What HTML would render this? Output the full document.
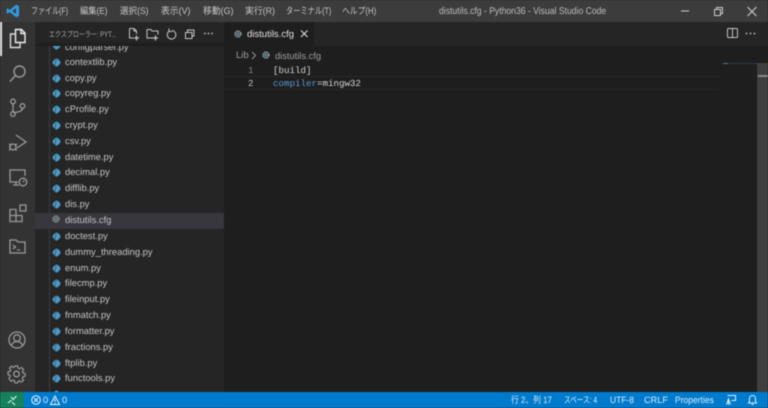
<!DOCTYPE html>
<html lang="ja"><head><meta charset="utf-8"><title>distutils.cfg - Python36 - Visual Studio Code</title>
<style>
*{box-sizing:border-box}
html,body{margin:0;padding:0;width:768px;height:408px;overflow:hidden;background:#1e1e1e}
body{font-family:"Liberation Sans","Noto Sans CJK JP",sans-serif;position:relative;text-rendering:geometricPrecision}
#w{position:absolute;left:0;top:0;width:768px;height:408px;overflow:hidden;filter:blur(.45px)}
.a{position:absolute;white-space:nowrap}
svg{position:absolute;overflow:visible}
.m{position:absolute;top:5px;font-size:9.5px;line-height:13px;color:#c6c6c6;white-space:nowrap;transform-origin:0 50%}
.f{position:absolute;left:65px;margin-top:-.8px;font-size:9.4px;line-height:14px;height:14px;color:#c4c4c4;white-space:nowrap}
.p{position:absolute;left:51px;width:10px;height:10px}
.p i{position:absolute;left:1.5px;top:1.5px;width:7px;height:7px;background:#4a9bc8;transform:rotate(45deg);border-radius:2.2px}
.p b{position:absolute;left:4.4px;top:.8px;width:1.2px;height:8.4px;background:#252526;transform:rotate(12deg);opacity:.45}
.s{position:absolute;top:395px;font-size:9.2px;line-height:11px;color:#d8ecf8;white-space:nowrap;transform-origin:0 50%}
</style></head><body><div id="w">
<div class="a" style="left:0;top:0;width:768px;height:22px;background:#3c3c3c"></div>
<div class="a" style="left:0;top:22px;width:35px;height:370px;background:#333"></div>
<div class="a" style="left:35px;top:22px;width:189px;height:370px;background:#252526"></div>
<div class="a" style="left:224px;top:22px;width:544px;height:24px;background:#252526"></div>
<div class="a" style="left:224px;top:22px;width:90px;height:24px;background:#1e1e1e"></div>
<div class="a" style="left:0;top:392px;width:768px;height:16px;background:#007acc"></div>
<div class="a" style="left:0;top:392px;width:24px;height:16px;background:#16825d"></div>

<svg style="left:6px;top:4px" width="14" height="14" viewBox="0 0 14 14"><path d="M10 .8 13 2v10l-3 1.200L3.700 8 1.600 9.600.6 9V5l1-.6L3.700 6zM10 4 6.200 7 10 10z" fill="#2f9be0" fill-rule="evenodd"/></svg>
<div class="m" style="left:31px;transform:scaleX(.74)">ファイル(F)</div>
<div class="m" style="left:80px;transform:scaleX(.87)">編集(E)</div>
<div class="m" style="left:120px;transform:scaleX(.9)">選択(S)</div>
<div class="m" style="left:161px;transform:scaleX(.93)">表示(V)</div>
<div class="m" style="left:203px;transform:scaleX(.93)">移動(G)</div>
<div class="m" style="left:245px;transform:scaleX(.93)">実行(R)</div>
<div class="m" style="left:286px;transform:scaleX(.76)">ターミナル(T)</div>
<div class="m" style="left:342px;transform:scaleX(.82)">ヘルプ(H)</div>
<div class="m" style="left:439px;font-size:9.800px;color:#bdbdbd;transform:scaleX(.878)">distutils.cfg - Python36 - Visual Studio Code</div>
<svg style="left:680px;top:4px" width="84" height="14" fill="none" stroke="#ccc"><path d="M1 7H9" stroke-width="1"/><path d="M34.500 5.500h6v6h-6zM36.500 5.500v-2h6v6h-2" stroke-width="1"/><path d="M67.500 3 76.500 12M76.500 3 67.500 12" stroke-width="1.100"/></svg>

<div class="a" style="left:0;top:22px;width:2px;height:34px;background:#e8e8e8"></div>
<svg style="left:8px;top:28px" width="20" height="22" fill="none" stroke="#eee" stroke-width="1.400"><path d="M7.500 1.500h6l3.500 3.500v9.500H7.500zM13 1.500V5.500h4"/><path d="M7.500 6H2.500v13.500h9.500v-5" stroke="#ddd"/></svg>
<svg style="left:8px;top:64px" width="20" height="20" fill="none" stroke="#9a9a9a" stroke-width="1.400"><circle cx="11.500" cy="7.500" r="5.500"/><path d="M7.500 11.500 2 17.500"/></svg>
<svg style="left:9px;top:98px" width="18" height="20" fill="none" stroke="#9a9a9a" stroke-width="1.300"><circle cx="4" cy="3.500" r="2.300"/><circle cx="4" cy="16" r="2.300"/><circle cx="13.500" cy="8" r="2.300"/><path d="M4 6v7.500M13.500 10.500c0 2.500-3 3-9 4.500"/></svg>
<svg style="left:8px;top:133px" width="20" height="20" fill="none" stroke="#9a9a9a" stroke-width="1.300"><path d="M8 2 18 9 9 15"/><circle cx="5" cy="14" r="3"/><path d="M1 11l2 1M1 17l2-1M9 11l-2 1M9 17l-2-1M1 14h1"/></svg>
<svg style="left:8px;top:168px" width="20" height="20" fill="none" stroke="#9a9a9a" stroke-width="1.300"><path d="M10 14H2V2h15v6M5 17h6M8 14v3"/><circle cx="15" cy="14" r="3.800"/><path d="M15 14l1.500-1.500"/></svg>
<svg style="left:8px;top:203px" width="20" height="20" fill="none" stroke="#9a9a9a" stroke-width="1.300"><path d="M2 6.500h6v6h6v6H2zM2 12.500h6v6"/><rect x="12" y="2" width="6" height="6"/></svg>
<svg style="left:8px;top:237px" width="20" height="18" fill="none" stroke="#9a9a9a" stroke-width="1.300"><path d="M2 3h6l2 2h7v11H2z"/><path d="M5 8l2.500 2L5 12M9 13h3"/></svg>
<svg style="left:8px;top:331px" width="19" height="19" fill="none" stroke="#9a9a9a" stroke-width="1.300"><circle cx="9" cy="9" r="8"/><circle cx="9" cy="7" r="3.300"/><path d="M3.500 14.500c1-3 3-4 5.500-4s4.500 1 5.500 4"/></svg>
<svg style="left:8px;top:365px" width="18" height="18" fill="none" stroke="#9a9a9a" stroke-width="1.300"><path d="M7.500 1h3l.5 2.500 1.500.6L14.800 2.800l2.200 2.200-1.400 2.200.6 1.500 2.400.6v3l-2.500.5-.6 1.500 1.400 2.100-2.200 2.200-2.200-1.400-1.500.6-.5 1.700h-3l-.5-2.500-1.500-.6-2.200 1.400L1 14.700l1.400-2.200-.6-1.500L0 10.500v-3l2.400-.5.6-1.500L1.600 3.300 3.800 1.200 6 2.600l1.100-.5z" transform="scale(.92)"/><circle cx="8.500" cy="9" r="2.800"/></svg>

<div class="a" style="left:49px;top:29px;font-size:8px;line-height:11px;color:#a8a8a8;transform-origin:0 50%;transform:scaleX(.75)">エクスプローラー: PYT...</div>
<svg style="left:127px;top:27px" width="90" height="14" fill="none" stroke="#c5c5c5" stroke-width="1"><path d="M2.500 1.500h4.500l2.500 2.500v3M2.500 1.500v9.500h4M7 1.500V4h2.500"/><path d="M9.500 8.500v5M7 11h5" stroke-width="1.200"/><path d="M20 2.500h4l1 1.500h6v3.500M20 2.500v8.500h6"/><path d="M28.500 8.500v5M26 11h5" stroke-width="1.200"/><path d="M45 3.500a4.300 4.300 0 1 1-2.500.5M42 1.500v3h3"/><path d="M58.500 5.500h6.500v6h-6.500zM60.500 5.500V3h6.500v6h-2"/><g fill="#c5c5c5" stroke="none"><circle cx="78" cy="6.500" r=".9"/><circle cx="81.500" cy="6.500" r=".9"/><circle cx="85" cy="6.500" r=".9"/></g></svg>

<div class="a" style="left:35px;top:46px;width:189px;height:346px;overflow:hidden">
<div class="a" style="left:14px;top:0;width:1px;height:346px;background:#3b3b3b"></div>
<div class="a" style="left:0;top:166.500px;width:189px;height:16px;background:#37373d"></div>
</div>
<div class="a" style="left:36px;top:41px;width:188px;height:5px;background:linear-gradient(#252526,#1c1c1c);"></div>

<div class="p" style="top:46px;height:5px;overflow:hidden"><i style="top:-4px"></i></div>
<div class="f" style="top:47px;height:6px;overflow:hidden"><span style="position:relative;top:-6px">configparser.py</span></div>
<div class="p" style="top:57px"><i></i><b></b></div><div class="f" style="top:56px">contextlib.py</div>
<div class="p" style="top:73px"><i></i><b></b></div><div class="f" style="top:72px">copy.py</div>
<div class="p" style="top:88px"><i></i><b></b></div><div class="f" style="top:87px">copyreg.py</div>
<div class="p" style="top:104px"><i></i><b></b></div><div class="f" style="top:103px">cProfile.py</div>
<div class="p" style="top:120px"><i></i><b></b></div><div class="f" style="top:119px">crypt.py</div>
<div class="p" style="top:136px"><i></i><b></b></div><div class="f" style="top:135px">csv.py</div>
<div class="p" style="top:152px"><i></i><b></b></div><div class="f" style="top:151px">datetime.py</div>
<div class="p" style="top:167px"><i></i><b></b></div><div class="f" style="top:166px">decimal.py</div>
<div class="p" style="top:183px"><i></i><b></b></div><div class="f" style="top:182px">difflib.py</div>
<div class="p" style="top:199px"><i></i><b></b></div><div class="f" style="top:198px">dis.py</div>
<svg style="left:51px;top:214px" width="10" height="10" fill="none" stroke="#8f9aa0"><circle cx="5" cy="5" r="2.800" stroke-width="1.800" stroke-dasharray="1.500 .7"/><circle cx="5" cy="5" r="1" stroke-width=".8"/></svg><div class="f" style="top:214px">distutils.cfg</div>
<div class="p" style="top:231px"><i></i><b></b></div><div class="f" style="top:230px">doctest.py</div>
<div class="p" style="top:247px"><i></i><b></b></div><div class="f" style="top:246px">dummy_threading.py</div>
<div class="p" style="top:263px"><i></i><b></b></div><div class="f" style="top:262px">enum.py</div>
<div class="p" style="top:278px"><i></i><b></b></div><div class="f" style="top:277px">filecmp.py</div>
<div class="p" style="top:294px"><i></i><b></b></div><div class="f" style="top:293px">fileinput.py</div>
<div class="p" style="top:310px"><i></i><b></b></div><div class="f" style="top:309px">fnmatch.py</div>
<div class="p" style="top:326px"><i></i><b></b></div><div class="f" style="top:325px">formatter.py</div>
<div class="p" style="top:342px"><i></i><b></b></div><div class="f" style="top:341px">fractions.py</div>
<div class="p" style="top:358px"><i></i><b></b></div><div class="f" style="top:357px">ftplib.py</div>
<div class="p" style="top:373px"><i></i><b></b></div><div class="f" style="top:372px">functools.py</div>
<div class="p" style="top:389px;height:3px;overflow:hidden"><i></i></div>
<div class="f" style="top:389.800px;height:3px;overflow:hidden">gc.py</div>

<svg style="left:233px;top:29px" width="10" height="10" fill="none" stroke="#8fa8b5"><circle cx="5" cy="5" r="2.800" stroke-width="1.800" stroke-dasharray="1.500 .7"/><circle cx="5" cy="5" r="1" stroke-width=".8"/></svg>
<div class="a" style="left:247px;top:28px;font-size:9.500px;line-height:13px;color:#e2e2e2">distutils.cfg</div>
<svg style="left:300px;top:30px" width="10" height="10" fill="none" stroke="#ddd" stroke-width="1.100"><path d="M1 .5 7.500 7M7.500 .5 1 7"/></svg>
<svg style="left:727px;top:27px" width="12" height="12" fill="none" stroke="#c5c5c5" stroke-width="1"><rect x=".5" y="1.500" width="10" height="9" rx="1"/><path d="M5.500 1.500v9"/></svg>
<svg style="left:745px;top:30px" width="12" height="6" fill="#c5c5c5"><circle cx="1.500" cy="3.500" r=".9"/><circle cx="5.500" cy="3.500" r=".9"/><circle cx="9.500" cy="3.500" r=".9"/></svg>

<div class="a" style="left:236px;top:50px;font-size:9.500px;line-height:12px;color:#a0a0a0">Lib</div>
<svg style="left:251px;top:51px" width="6" height="9" fill="none" stroke="#999"><path d="M1 1l3.500 3.500L1 8"/></svg>
<svg style="left:261px;top:50px" width="10" height="10" fill="none" stroke="#8fa8b5"><circle cx="5" cy="5" r="2.800" stroke-width="1.800" stroke-dasharray="1.500 .7"/><circle cx="5" cy="5" r="1" stroke-width=".8"/></svg>
<div class="a" style="left:275px;top:50px;font-size:9.300px;line-height:12px;color:#a0a0a0">distutils.cfg</div>

<div class="a" style="left:224px;top:76px;width:495px;height:1px;background:#282828"></div>
<div class="a" style="left:224px;top:89px;width:495px;height:1px;background:#282828"></div>
<div class="a" style="left:248px;top:64px;font:9.170px/13px 'Liberation Mono',monospace;color:#858585">1</div>
<div class="a" style="left:248px;top:77px;font:9.170px/13px 'Liberation Mono',monospace;color:#c6c6c6">2</div>
<div class="a" style="left:273px;top:64px;font:9.170px/13px 'Liberation Mono',monospace;color:#d4d4d4">[build]</div>
<div class="a" style="left:273px;top:77px;font:9.170px/13px 'Liberation Mono',monospace;color:#d4d4d4"><span style="color:#569cd6">compiler</span>=mingw32</div>

<div class="a" style="left:723px;top:63px;width:34px;height:1px;background:#264055"></div>
<div class="a" style="left:723px;top:63px;width:5px;height:1px;background:#4a7a9a"></div>
<div class="a" style="left:757px;top:63px;width:11px;height:329px;background:#3f3f3f"></div>
<div class="a" style="left:758px;top:75px;width:10px;height:2px;background:#8a8a8a"></div>

<svg style="left:31px;top:395px" width="11" height="11" fill="none" stroke="#e8f4fb"><circle cx="5" cy="5" r="4.300"/><path d="M3 3l4 4M7 3l-4 4"/></svg>
<div class="s" style="left:43px">0</div>
<svg style="left:50px;top:395px" width="11" height="11" fill="none" stroke="#e8f4fb"><path d="M5 1 9.500 9.500H.5zM5 4v3M5 8v1"/></svg>
<div class="s" style="left:62px">0</div>
<svg style="left:7px;top:395px" width="11" height="11" fill="none" stroke="#e6f4ee" stroke-width="1.100"><path d="M1 8 4.500 5M9.500 1 6 4.500M4 2l3 3M5 7l3 3"/></svg>
<div class="s" style="left:511px;transform:scaleX(.85)">行 2、列 17</div>
<div class="s" style="left:564px;transform:scaleX(.72)">スペース: 4</div>
<div class="s" style="left:610px;transform:scaleX(.92)">UTF-8</div>
<div class="s" style="left:644px">CRLF</div>
<div class="s" style="left:675px;transform:scaleX(.93)">Properties</div>
<svg style="left:725px;top:394px" width="12" height="12" fill="none" stroke="#e0f0fa"><path d="M2.500 1.500h8v5h-4M3.500 4v7M3.500 5 1.500 10.500M3.500 5l2 5.500"/></svg>
<svg style="left:747px;top:394px" width="11" height="12" fill="none" stroke="#e0f0fa"><path d="M5.500 1.500c-2 0-3 1.500-3 3v3l-1 1.500h8l-1-1.500v-3c0-1.500-1-3-3-3zM4.500 10.500h2"/></svg>
</div></body></html>
